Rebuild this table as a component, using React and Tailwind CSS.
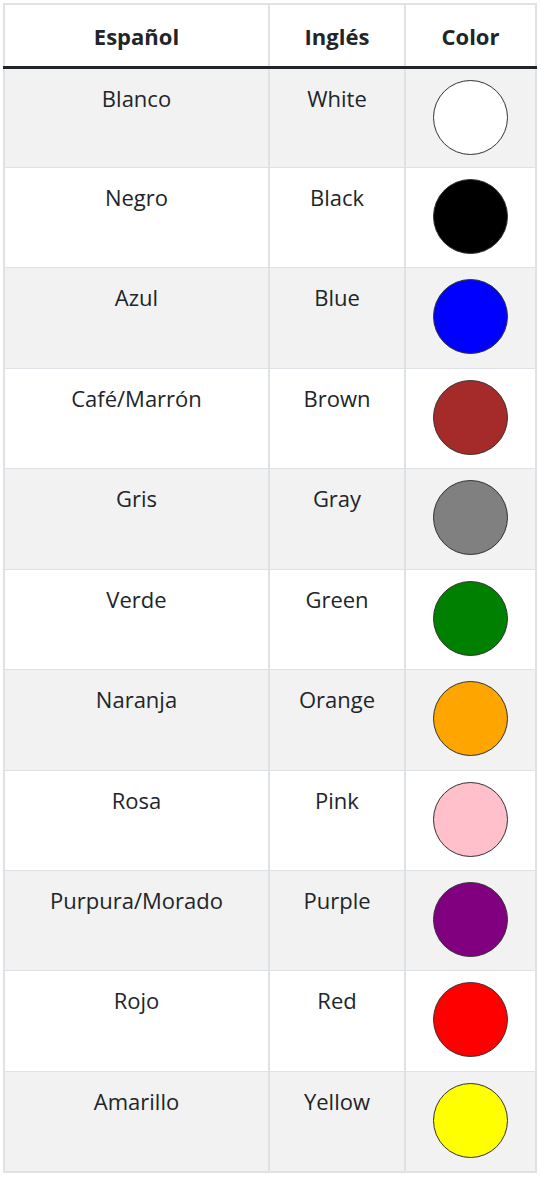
const colors = [
  { es: "Blanco", en: "White", hex: "bg-[#ffffff]" },
  { es: "Negro", en: "Black", hex: "bg-[#000000]" },
  { es: "Azul", en: "Blue", hex: "bg-[#0000ff]" },
  { es: "Café/Marrón", en: "Brown", hex: "bg-[#a52a2a]" },
  { es: "Gris", en: "Gray", hex: "bg-[#808080]" },
  { es: "Verde", en: "Green", hex: "bg-[#008000]" },
  { es: "Naranja", en: "Orange", hex: "bg-[#ffa500]" },
  { es: "Rosa", en: "Pink", hex: "bg-[#ffc0cb]" },
  { es: "Purpura/Morado", en: "Purple", hex: "bg-[#800080]" },
  { es: "Rojo", en: "Red", hex: "bg-[#ff0000]" },
  { es: "Amarillo", en: "Yellow", hex: "bg-[#ffff00]" },
];

const App = () => {
  return (
    <div className="bg-white min-h-screen pt-[3px] pl-[3px] [font-family:'Open_Sans',sans-serif] text-[#212529]">
      <table className="w-[532px] table-fixed border-collapse border-2 border-[#dee2e6] text-[22px] leading-[1.5]">
        <colgroup>
          <col className="w-[265px]" />
          <col className="w-[136px]" />
          <col className="w-[131px]" />
        </colgroup>
        <thead>
          <tr className="h-[63px] border-b-[3px] border-b-[#212529]">
            <th className="border-x-2 border-[#dee2e6] font-bold align-middle pt-[2px]">Español</th>
            <th className="border-x-2 border-[#dee2e6] font-bold align-middle pt-[2px]">Inglés</th>
            <th className="border-x-2 border-[#dee2e6] font-bold align-middle pt-[2px]">Color</th>
          </tr>
        </thead>
        <tbody>
          {colors.map((c, i) => (
            <tr
              key={c.en}
              className={`border-t border-[#dee2e6] ${i % 2 === 0 ? "bg-[#f2f2f2]" : "bg-white"}`}
            >
              <td className="border-x-2 border-[#dee2e6] text-center align-top pt-[13px] h-[100.45px]">
                {c.es}
              </td>
              <td className="border-x-2 border-[#dee2e6] text-center align-top pt-[13px]">
                {c.en}
              </td>
              <td className="border-x-2 border-[#dee2e6] align-top pt-[11px]">
                <div className={`mx-auto w-[75px] h-[75px] rounded-full border border-[#333333] ${c.hex}`} />
              </td>
            </tr>
          ))}
        </tbody>
      </table>
    </div>
  );
};

export default App;
